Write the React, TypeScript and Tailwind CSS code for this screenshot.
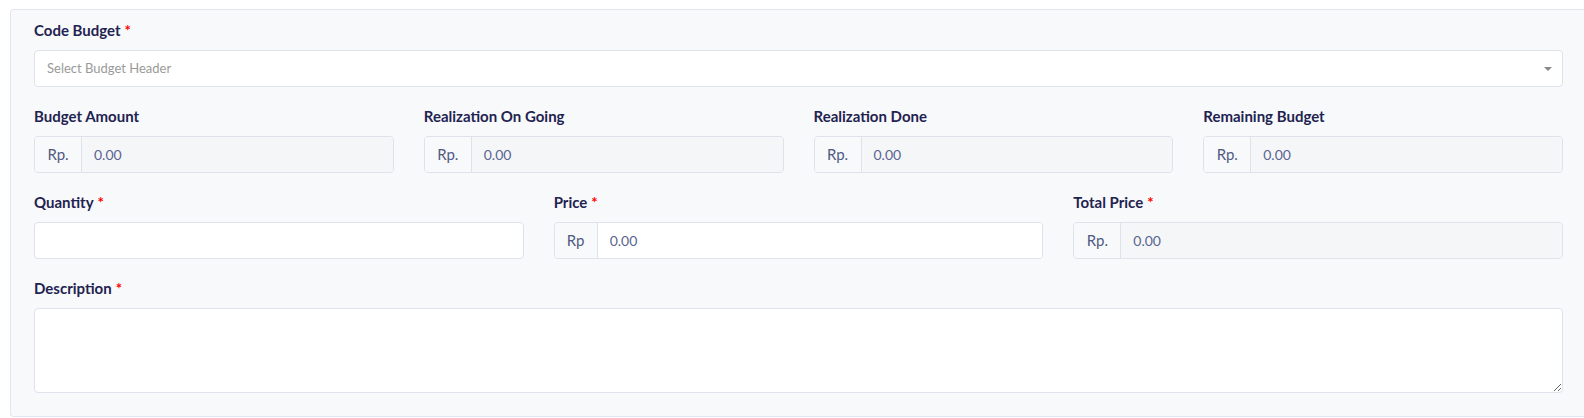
const font = { fontFamily: "Lato, 'Liberation Sans', sans-serif" };

function Label({ text, required }: { text: string; required?: boolean }) {
  return (
    <div className="mb-[9px] h-[21px] text-[15px] font-bold leading-[21px] text-[#1f2350]">
      {text}
      {required && <span className="ml-[4px] text-[#ff0000]">*</span>}
    </div>
  );
}

function AddonInput({
  addon,
  value,
  disabled,
  addonWidth = "w-[47px]",
}: {
  addon: string;
  value: string;
  disabled?: boolean;
  addonWidth?: string;
}) {
  return (
    <div className="flex h-[37px] overflow-hidden rounded-[4px] border border-[#dfe2ea]">
      <div
        className={`${addonWidth} flex shrink-0 items-center justify-center border-r border-[#dfe2ea] bg-[#f8f9fb] text-[15px] text-[#4f5a82]`}
      >
        {addon}
      </div>
      <div
        className={`flex flex-1 items-center pl-[12px] text-[14px] text-[#5a6590] ${
          disabled ? "bg-[#f5f6f8]" : "bg-white"
        }`}
      >
        {value}
      </div>
    </div>
  );
}

export default function App() {
  return (
    <div className="w-full bg-white pl-[10px] pt-[9px]" style={font}>
      <div className="rounded-l-[4px] border border-r-0 border-[#e3e6ee] bg-[#f8f9fb] pb-[23px] pl-[23px] pr-[21px] pt-[10px]">
        <Label text="Code Budget" required />
        <div className="mb-[19px] flex h-[37px] items-center justify-between rounded-[4px] border border-[#dfe2ea] bg-white pl-[12px] pr-[10px]">
          <span className="text-[13px] text-[#9a9a9a]">Select Budget Header</span>
          <svg width="8" height="4" viewBox="0 0 8 4">
            <path d="M0 0h8L4 4z" fill="#888" />
          </svg>
        </div>

        <div className="mb-[19px] grid grid-cols-4 gap-x-[30px]">
          {["Budget Amount", "Realization On Going", "Realization Done", "Remaining Budget"].map((l) => (
            <div key={l}>
              <Label text={l} />
              <AddonInput addon="Rp." value="0.00" disabled />
            </div>
          ))}
        </div>

        <div className="mb-[19px] grid grid-cols-3 gap-x-[30px]">
          <div>
            <Label text="Quantity" required />
            <div className="h-[37px] rounded-[4px] border border-[#dfe2ea] bg-white" />
          </div>
          <div>
            <Label text="Price" required />
            <AddonInput addon="Rp" value="0.00" addonWidth="w-[43px]" />
          </div>
          <div>
            <Label text="Total Price" required />
            <AddonInput addon="Rp." value="0.00" disabled />
          </div>
        </div>

        <Label text="Description" required />
        <textarea className="block h-[85px] w-full rounded-[4px] border border-[#dfe2ea] bg-white outline-none" />
      </div>
    </div>
  );
}
